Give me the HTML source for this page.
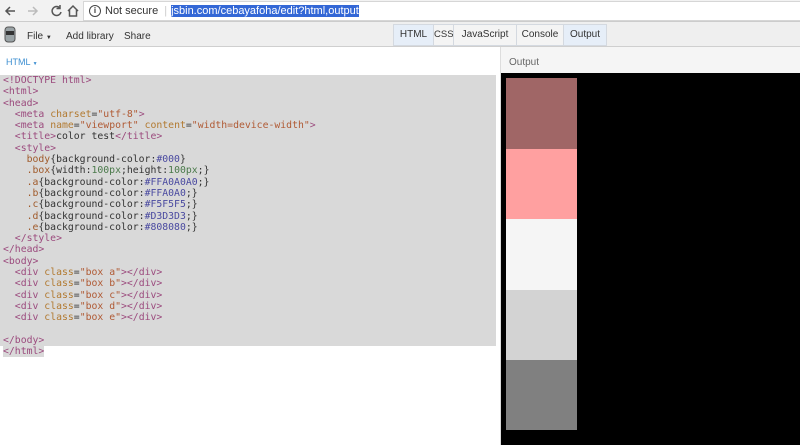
<!DOCTYPE html>
<html><head><meta charset="utf-8"><style>
*{margin:0;padding:0;box-sizing:border-box}
body{width:800px;height:445px;overflow:hidden;background:#fff;font-family:"Liberation Sans",sans-serif;position:relative}
.abs{position:absolute}
#addr{left:0;top:0;width:800px;height:22px;background:#f2f2f2;border-bottom:1px solid #ccc}
#input{left:83px;top:1px;width:717px;height:20px;background:#fff;border:1px solid #d6d6d6;border-right:none;font-size:11px;color:#333;line-height:18px}
#tb{left:0;top:22px;width:800px;height:25px;background:#efefef;border-bottom:1px solid #cfcfcf;font-size:10px;color:#333}
.tab{position:absolute;top:2px;height:22px;line-height:20px;font-size:10px;color:#333;text-align:center;border:1px solid #d4d9e0;background:#f4f4f4;white-space:nowrap}
.on{background:#e6eef8}
#code{left:0;top:75px;width:496px;height:271px;background:#d9d9d9}
pre{position:absolute;left:3px;top:75px;font-family:"DejaVu Sans Mono","Liberation Mono",monospace;font-size:9.8px;line-height:11.3px;color:#333}
.t{color:#9b4a7d}.a{color:#b27a31}.s{color:#b05a34}.n{color:#4b7a4b}.h{color:#4a4aa0}.k{color:#a05a2a}
#out{left:500px;top:47px;width:300px;height:398px;background:#000;border-left:1px solid #ddd}
#oh{left:501px;top:47px;width:299px;height:26px;background:#f5f5f5;font-size:10px;color:#666;padding:10px 0 0 8px}
.bx{position:absolute;left:506px;width:71px}
</style></head><body>
<div class="abs" id="addr">
<svg class="abs" style="left:4px;top:4px" width="76" height="14" viewBox="0 0 76 14" fill="none" stroke-width="1.5">
<path d="M11 7H2M6 3L2 7l4 4" stroke="#555"/>
<path d="M24 7h9M29 3l4 4-4 4" stroke="#bbb"/>
<path d="M56 4a4.5 4.5 0 1 0 1 4M56 1v3.5h-3.5" stroke="#555"/>
<path d="M64 7l5-5 5 5M65.5 6v6h7V6" stroke="#555"/>
</svg>
<div class="abs" id="input"><span style="display:inline-block;width:12px;height:12px;border:1.3px solid #444;border-radius:50%;margin:3px 4px 0 5px;vertical-align:top;font-size:8px;line-height:9px;text-align:center;font-weight:bold">i</span><span>Not secure</span><span style="color:#ccc;margin:0 4px 0 6px">|</span><span style="background:#3367d6;color:#fff">jsbin.com/cebayafoha/edit?html,output</span></div>
</div>
<div class="abs" id="tb">
<svg class="abs" style="left:4px;top:4px" width="12" height="17" viewBox="0 0 12 17"><rect x="1" y="1" width="10" height="15" rx="3" fill="#9aa3a6" stroke="#555"/><rect x="2" y="5" width="8" height="4" fill="#333"/></svg>
<span class="abs" style="left:27px;top:9px">File <span style="font-size:6px">▼</span></span>
<span class="abs" style="left:66px;top:9px">Add library</span>
<span class="abs" style="left:124px;top:9px">Share</span>
<div class="tab on" style="left:393px;width:41px">HTML</div>
<div class="tab" style="left:433px;width:21px;font-size:9.5px">CSS</div>
<div class="tab" style="left:453px;width:64px">JavaScript</div>
<div class="tab" style="left:516px;width:48px">Console</div>
<div class="tab on" style="left:563px;width:44px">Output</div>
</div>
<div class="abs" style="left:6px;top:57px;font-size:9px;color:#3d8fd1">HTML <span style="font-size:5px">▼</span></div>
<div class="abs" id="code"></div>
<pre style="top:75px"><span class="t">&lt;!DOCTYPE html&gt;</span>
<span class="t">&lt;html&gt;</span>
<span class="t">&lt;head&gt;</span>
  <span class="t">&lt;meta</span> <span class="a">charset</span>=<span class="s">"utf-8"</span><span class="t">&gt;</span>
  <span class="t">&lt;meta</span> <span class="a">name</span>=<span class="s">"viewport"</span> <span class="a">content</span>=<span class="s">"width=device-width"</span><span class="t">&gt;</span>
  <span class="t">&lt;title&gt;</span>color test<span class="t">&lt;/title&gt;</span>
  <span class="t">&lt;style&gt;</span>
    <span class="k">body</span>{background-color:<span class="h">#000</span>}
    <span class="k">.box</span>{width:<span class="n">100px</span>;height:<span class="n">100px</span>;}
    <span class="k">.a</span>{background-color:<span class="h">#FFA0A0A0</span>;}
    <span class="k">.b</span>{background-color:<span class="h">#FFA0A0</span>;}
    <span class="k">.c</span>{background-color:<span class="h">#F5F5F5</span>;}
    <span class="k">.d</span>{background-color:<span class="h">#D3D3D3</span>;}
    <span class="k">.e</span>{background-color:<span class="h">#808080</span>;}
  <span class="t">&lt;/style&gt;</span>
<span class="t">&lt;/head&gt;</span>
<span class="t">&lt;body&gt;</span>
  <span class="t">&lt;div</span> <span class="a">class</span>=<span class="s">"box a"</span><span class="t">&gt;&lt;/div&gt;</span>
  <span class="t">&lt;div</span> <span class="a">class</span>=<span class="s">"box b"</span><span class="t">&gt;&lt;/div&gt;</span>
  <span class="t">&lt;div</span> <span class="a">class</span>=<span class="s">"box c"</span><span class="t">&gt;&lt;/div&gt;</span>
  <span class="t">&lt;div</span> <span class="a">class</span>=<span class="s">"box d"</span><span class="t">&gt;&lt;/div&gt;</span>
  <span class="t">&lt;div</span> <span class="a">class</span>=<span class="s">"box e"</span><span class="t">&gt;&lt;/div&gt;</span>

<span class="t">&lt;/body&gt;</span>
<span class="t" style="background:#d9d9d9">&lt;/html&gt;</span></pre>
<div class="abs" id="out"></div>
<div class="abs" id="oh">Output</div>
<div class="bx" style="top:78px;height:71px;background:#a06666"></div>
<div class="bx" style="top:149px;height:70px;background:#ffa0a0"></div>
<div class="bx" style="top:219px;height:71px;background:#f5f5f5"></div>
<div class="bx" style="top:290px;height:70px;background:#d3d3d3"></div>
<div class="bx" style="top:360px;height:70px;background:#808080"></div>
</body></html>
